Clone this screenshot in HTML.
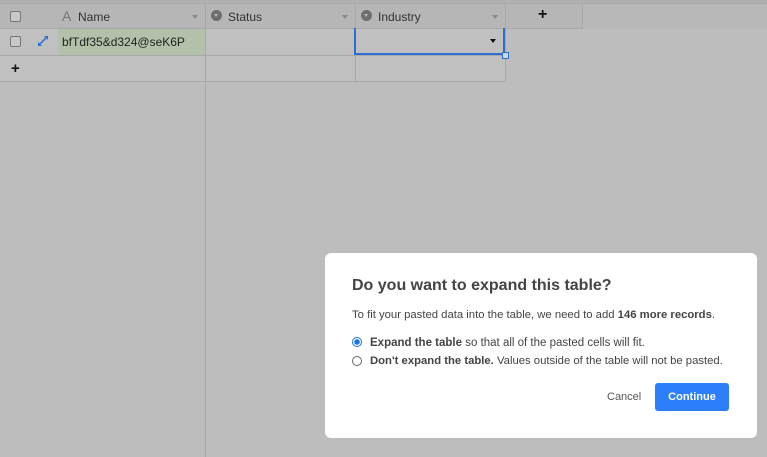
<!DOCTYPE html>
<html><head><style>
body{margin:0;width:767px;height:457px;background:#bdbdbd;font-family:"Liberation Sans",sans-serif;position:relative;overflow:hidden;font-size:12px;color:#333}
.a{position:absolute}
.hdr{top:3px;height:26px;background:#b6b6b6;border-top:1px solid #a8a8a8;border-bottom:1px solid #a8a8a8;box-sizing:border-box}
.vl{width:1px;background:#a8a8a8}
.hl{height:1px;background:#a8a8a8}
.cb{width:9px;height:9px;border:1px solid #777;border-radius:2px;background:#c8c8c8}
.ic{width:11px;height:11px;border-radius:50%;background:#6e6e6e}
.ic:after{content:"";position:absolute;left:3px;top:4px;border-left:2.5px solid transparent;border-right:2.5px solid transparent;border-top:3px solid #bbb}
.dd{border-left:3px solid transparent;border-right:3px solid transparent;border-top:4px solid #8a8a8a}
.t{font-size:12px;color:#333}
</style></head><body>
<div class="a" style="left:0;top:0;width:767px;height:3px;background:#b0b0b0"></div>
<div class="a hdr" style="left:0;width:582px"></div>
<div class="a" style="left:582px;top:3px;width:185px;height:26px;background:#b9b9b9;border-top:1px solid #a8a8a8;box-sizing:border-box"></div>
<div class="a" style="left:0;top:29px;width:505px;height:52px;background:#c0c0c0"></div>
<div class="a" style="left:58px;top:29px;width:147px;height:26px;background:#b3c1aa"></div>
<div class="a hl" style="left:0;top:55px;width:505px"></div>
<div class="a hl" style="left:0;top:81px;width:505px"></div>
<div class="a vl" style="left:205px;top:3px;height:454px"></div>
<div class="a vl" style="left:355px;top:3px;height:78px"></div>
<div class="a vl" style="left:505px;top:3px;height:78px"></div>
<div class="a vl" style="left:582px;top:3px;height:26px"></div>
<div class="a cb" style="left:10px;top:11px"></div>
<div class="a" style="left:62px;top:8px;font-size:14px;color:#777">A</div>
<div class="a t" style="left:78px;top:10px">Name</div>
<div class="a dd" style="left:192px;top:15px"></div>
<div class="a ic" style="left:211px;top:10px"></div>
<div class="a t" style="left:228px;top:10px">Status</div>
<div class="a dd" style="left:342px;top:15px"></div>
<div class="a ic" style="left:361px;top:10px"></div>
<div class="a t" style="left:378px;top:10px">Industry</div>
<div class="a dd" style="left:492px;top:15px"></div>
<div class="a" style="left:538px;top:6px;font-size:16px;font-weight:bold;color:#111">+</div>
<div class="a cb" style="left:10px;top:36px"></div>
<svg class="a" style="left:37px;top:35px" width="12" height="12"><path d="M3 9L9 3" stroke="#2a6fd6" stroke-width="1.5" fill="none"/><path d="M7 1h4v4zM1 7v4h4z" fill="#2a6fd6"/></svg>
<div class="a t" style="left:62px;top:35px;color:#222">bfTdf35&amp;d324@seK6P</div>
<div class="a" style="left:354px;top:28px;width:151px;height:27px;border:2px solid #2d6fd2;border-top:none;box-sizing:border-box"></div>
<div class="a" style="left:490px;top:39px;border-left:3px solid transparent;border-right:3px solid transparent;border-top:4px solid #111"></div>
<div class="a" style="left:502px;top:52px;width:5px;height:5px;border:1px solid #2d6fd2;background:#cfd8e6"></div>
<div class="a" style="left:11px;top:60px;font-size:15px;font-weight:bold;color:#111">+</div>
<div class="a" style="left:325px;top:253px;width:432px;height:185px;background:#fff;border-radius:6px">
 <div class="a" style="left:27px;top:24px;font-size:16px;font-weight:bold;color:#444">Do you want to expand this table?</div>
 <div class="a" style="left:27px;top:56px;font-size:11.3px;color:#444">To fit your pasted data into the table, we need to add <b>146 more records</b>.</div>
 <div class="a" style="left:27px;top:84px;width:8px;height:8px;border-radius:50%;border:1.5px solid #1a73e8;background:radial-gradient(#1a73e8 2.5px,#fff 3px)"></div>
 <div class="a" style="left:45px;top:84px;font-size:11.5px;color:#444"><b>Expand the table</b> so that all of the pasted cells will fit.</div>
 <div class="a" style="left:27px;top:103px;width:8px;height:8px;border-radius:50%;border:1px solid #666"></div>
 <div class="a" style="left:45px;top:102px;font-size:11.3px;color:#444"><b>Don't expand the table.</b> Values outside of the table will not be pasted.</div>
 <div class="a" style="left:282px;top:138px;font-size:11px;color:#555">Cancel</div>
 <div class="a" style="left:330px;top:130px;width:74px;height:28px;background:#2d7ff9;border-radius:3px;color:#fff;font-weight:bold;font-size:11px;text-align:center;line-height:28px">Continue</div>
</div>
</body></html>
